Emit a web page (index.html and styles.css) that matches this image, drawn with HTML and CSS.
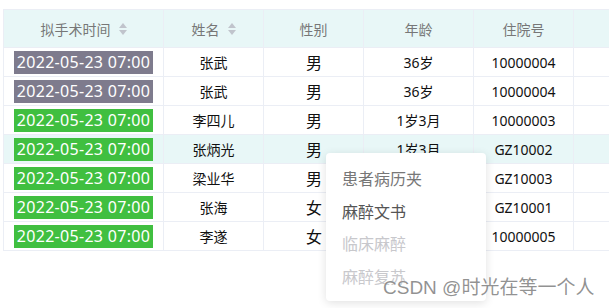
FILE: index.html
```html
<!DOCTYPE html>
<html>
<head>
<meta charset="utf-8">
<link rel="stylesheet" href="styles.css">
</head>
<body>
<div class="page">
  <table class="grid">
    <colgroup>
      <col class="c1"><col class="c2"><col class="c3"><col class="c4"><col class="c5"><col class="c6">
    </colgroup>
    <thead>
      <tr>
        <th><span class="hcell">拟手术时间<span class="sort"><i class="up"></i><i class="down"></i></span></span></th>
        <th><span class="hcell">姓名<span class="sort"><i class="up"></i><i class="down"></i></span></span></th>
        <th>性别</th>
        <th>年龄</th>
        <th>住院号</th>
        <th></th>
      </tr>
    </thead>
    <tbody>
      <tr><td><span class="tag gray">2022-05-23 07:00</span></td><td>张武</td><td class="sex">男</td><td>36岁</td><td>10000004</td><td></td></tr>
      <tr><td><span class="tag gray">2022-05-23 07:00</span></td><td>张武</td><td class="sex">男</td><td>36岁</td><td>10000004</td><td></td></tr>
      <tr><td><span class="tag green">2022-05-23 07:00</span></td><td>李四儿</td><td class="sex">男</td><td>1岁3月</td><td>10000003</td><td></td></tr>
      <tr class="hl"><td><span class="tag green">2022-05-23 07:00</span></td><td>张炳光</td><td class="sex">男</td><td>1岁3月</td><td>GZ10002</td><td></td></tr>
      <tr><td><span class="tag green">2022-05-23 07:00</span></td><td>梁业华</td><td class="sex">男</td><td></td><td>GZ10003</td><td></td></tr>
      <tr><td><span class="tag green">2022-05-23 07:00</span></td><td>张海</td><td class="sex">女</td><td></td><td>GZ10001</td><td></td></tr>
      <tr><td><span class="tag green">2022-05-23 07:00</span></td><td>李遂</td><td class="sex">女</td><td></td><td>10000005</td><td></td></tr>
    </tbody>
  </table>
</div>
<ul class="menu">
  <li>患者病历夹</li>
  <li class="dark">麻醉文书</li>
  <li class="off">临床麻醉</li>
  <li class="off">麻醉复苏</li>
</ul>
<div class="mark">CSDN @时光在等一个人</div>
</body>
</html>
```
FILE: styles.css
```css
html, body {
  margin: 0;
  padding: 0;
  background: #fff;
  overflow: hidden;
  width: 609px;
  height: 308px;
  font-family: "Noto Sans", "Noto Sans CJK SC", sans-serif;
}
.page {
  padding: 9px 0 0 3px;
}
.grid {
  border-collapse: collapse;
  table-layout: fixed;
  width: 606px;
}
.c1 { width: 160px; }
.c2 { width: 100px; }
.c3 { width: 100px; }
.c4 { width: 110px; }
.c5 { width: 100px; }
.c6 { width: 36px; }
.grid th, .grid td {
  border: 1px solid #ebeef5;
  text-align: center;
  padding: 0;
  white-space: nowrap;
  overflow: hidden;
}
.grid th {
  height: 37px;
  background: #e8f7f7;
  color: #777;
  font-weight: normal;
  font-size: 14px;
}
.grid td {
  height: 28px;
  font-size: 14px;
  color: #111;
}
.grid td.sex { font-size: 16px; text-align: left; padding-left: 42px; }
.grid tr.hl td { background: #e8f7f7; }
.hcell {
  display: inline-flex;
  align-items: center;
  gap: 8px;
}
.sort {
  display: inline-flex;
  flex-direction: column;
  gap: 2px;
}
.sort i {
  display: block;
  width: 0;
  height: 0;
  border-left: 4px solid transparent;
  border-right: 4px solid transparent;
}
.sort .up { border-bottom: 5px solid #c0c4cc; }
.sort .down { border-top: 5px solid #c0c4cc; }
.tag {
  display: inline-block;
  color: #fff;
  font-size: 16px;
  line-height: 23px;
  height: 23px;
  width: 139px;
  letter-spacing: 0.3px;
  vertical-align: middle;
}
.tag.gray { background: #7e7b8d; }
.tag.green { background: #40bf40; }
.menu {
  position: absolute;
  left: 326px;
  top: 153px;
  width: 160px;
  margin: 0;
  padding: 9px 0 8px;
  list-style: none;
  background: #fff;
  border-radius: 4px;
  box-shadow: 0 2px 10px rgba(0,0,0,0.12);
  font-family: "Noto Sans CJK SC", sans-serif;
}
.menu li {
  height: 32.7px;
  line-height: 32.7px;
  padding-left: 16px;
  font-size: 16px;
  color: #777;
}
.menu li.dark { color: #555; }
.menu li.off { color: #c8c8cc; }
.mark {
  position: absolute;
  left: 383px;
  top: 275px;
  font-family: "Liberation Sans", "Noto Sans CJK SC", sans-serif;
  font-size: 19px;
  line-height: 25px;
  color: rgba(110,110,110,0.75);
  text-shadow: 0 0 1px #fff;
}
```
